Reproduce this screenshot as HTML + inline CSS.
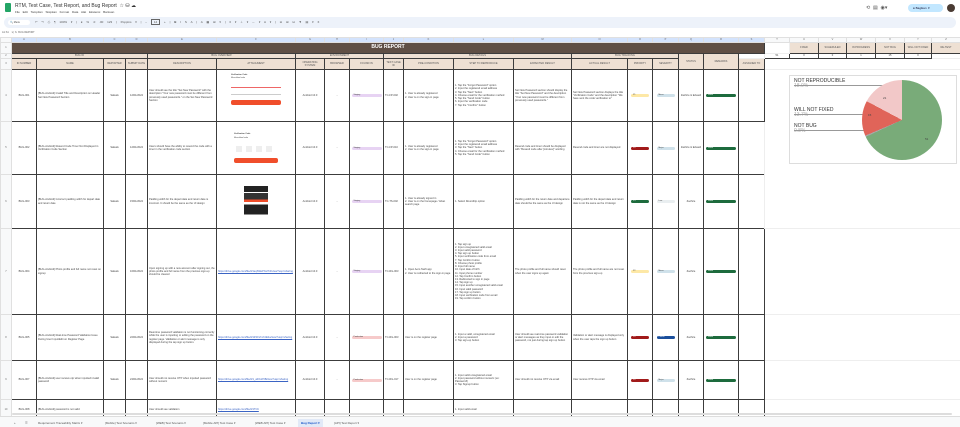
<!DOCTYPE html>
<html><head><meta charset="utf-8">
<style>
*{box-sizing:border-box;margin:0;padding:0}
body{width:960px;height:427px;overflow:hidden;background:#fff;font-family:"Liberation Sans",sans-serif;position:relative;color:#444}
.abs{position:absolute}
#tb{left:4px;top:17px;width:952px;height:11px;background:#edf2fa;border-radius:6px}
table{border-collapse:collapse;table-layout:fixed;position:absolute;left:0;top:37px;width:960px}
td{font-size:2.6px;line-height:3.2px;overflow:hidden;vertical-align:middle;padding:0 1px;white-space:normal;word-break:break-word}
.cl td{height:5px;background:#f8f9fa;border:1px solid #e0e0e0;text-align:center;color:#666;font-size:2.5px}
.cl td.sel{background:#d3e3fd}
.rh{background:#f8f9fa;border:1px solid #e0e0e0;color:#666;text-align:center;font-size:2.5px}
.g td.c{border:1px solid #3c3c3c}
.hd{background:#eee0d3;text-align:center;color:#555;border:1px solid #3c3c3c}
.title{background:#5f4f45;color:#fff;font-weight:bold;font-size:5px;text-align:center;border:1px solid #3c3c3c}
.e{border:1px solid #eee}
.ctr{text-align:center}
.chip{display:block;height:3px;border-radius:2px;margin:0 auto;font-size:2px;line-height:3px;padding-left:2px;text-align:left}
.lnk{color:#3b64c4;text-decoration:underline}
#tabs{left:0;top:416px;width:960px;height:11px;background:#f8f9fa;border-top:1px solid #ddd;font-size:3px;color:#555}
#tabs span{position:absolute;top:4px}
</style></head><body>
<div class="abs" style="left:5px;top:3px;width:6px;height:9px;background:#23a566;border-radius:1px"></div>
<div class="abs" style="left:15px;top:3px;font-size:5px;color:#333">RTM, Test Case, Test Report, and Bug Report &nbsp;☆ ⛁ ☁</div>
<div class="abs" style="left:15px;top:10px;font-size:3px;color:#444;word-spacing:2px">File Edit Tampilan Sisipkan Format Data Alat Ekstensi Bantuan</div>
<div class="abs" style="left:866px;top:5px;font-size:5px;color:#555">⟲ &nbsp;▤ &nbsp;◉▾</div>
<div class="abs" style="left:908px;top:4px;width:35px;height:8px;background:#c2e7ff;border-radius:4px;font-size:3px;line-height:8px;padding-left:5px;color:#113">● Bagikan &nbsp;▾</div>
<div class="abs" style="left:947px;top:4px;width:8px;height:8px;background:#4a3b33;border-radius:50%"></div>
<div id="tb" class="abs"></div>
<div class="abs" style="left:8px;top:20px;width:22px;height:5px;background:#fff;border-radius:3px;font-size:2.5px;line-height:5px;padding-left:2px">🔍 Menu</div>
<div class="abs" style="left:35px;top:20px;font-size:3px;color:#555;word-spacing:3px;white-space:nowrap">↶ ↷ ⎙ ¶ 100% ▾ | £ % .0 .00 123 | Poppins ▾ | − <span style="border:1px solid #666;padding:0 2px">14</span> + | <b>B</b> I S A | A ▦ ⊞ ▾ | ≡ ▾ ⊥ ▾ ↔ ▾ A ▾ | ⊖ ⊞ ⊟ ▼ ▤ ▾ Σ</div>
<div class="abs" style="left:2px;top:31px;font-size:2.5px;color:#666">A1:S1 &nbsp;&nbsp;&nbsp;▾ | fx &nbsp;BUG REPORT</div>

<table>
<colgroup>
<col style="width:11px"><col style="width:25px"><col style="width:67px"><col style="width:22px"><col style="width:22px"><col style="width:69px"><col style="width:79px"><col style="width:29px"><col style="width:25px"><col style="width:34px"><col style="width:20px"><col style="width:50px"><col style="width:60px"><col style="width:58px"><col style="width:56px"><col style="width:25px"><col style="width:26px"><col style="width:25px"><col style="width:35px"><col style="width:26px"><col style="width:25px"><col style="width:29px"><col style="width:28px"><col style="width:29px"><col style="width:29px"><col style="width:27px"><col style="width:29px">
</colgroup>
<tr class="cl"><td></td><td class="sel">A</td><td class="sel">B</td><td class="sel">C</td><td class="sel">D</td><td class="sel">E</td><td class="sel">F</td><td class="sel">G</td><td class="sel">H</td><td class="sel">I</td><td class="sel">J</td><td class="sel">K</td><td class="sel">L</td><td class="sel">M</td><td class="sel">N</td><td class="sel">O</td><td class="sel">P</td><td class="sel">Q</td><td class="sel">R</td><td class="sel">S</td><td>T</td><td>U</td><td>V</td><td>W</td><td>X</td><td>Y</td><td>Z</td></tr>
<tr style="height:11px"><td class="rh">1</td><td class="title" colspan="19">BUG REPORT</td><td class="e"></td><td class="hd">FIXED</td><td class="hd">SCHEDULED</td><td class="hd">IN PROGRESS</td><td class="hd">NOT BUG</td><td class="hd">WILL NOT FIXED</td><td class="hd">RE-TEST</td></tr>
<tr style="height:5px"><td class="rh">2</td><td class="hd" colspan="4">BUG ID</td><td class="hd" colspan="2">BUG OVERVIEW</td><td class="hd" colspan="3">ENVIRONMENT</td><td class="hd" colspan="4">BUG DETAILS</td><td class="hd" colspan="3">BUG TRACKING</td><td class="hd" rowspan="2">STATUS</td><td class="hd" rowspan="2">REMARKS</td><td class="e"></td><td class="ctr" style="border:1px solid #3c3c3c">51</td><td class="ctr" style="border:1px solid #3c3c3c">0</td><td class="ctr" style="border:1px solid #3c3c3c">0</td><td class="ctr" style="border:1px solid #3c3c3c">1</td><td class="ctr" style="border:1px solid #3c3c3c">15</td><td class="ctr" style="border:1px solid #3c3c3c">0</td></tr>
<tr style="height:11px"><td class="rh">3</td><td class="hd">ID NUMBER</td><td class="hd">NAME</td><td class="hd">REPORTER</td><td class="hd">SUBMIT DATE</td><td class="hd">DESCRIPTION</td><td class="hd">ATTACHMENT</td><td class="hd">OPERATING SYSTEM</td><td class="hd">BROWSER</td><td class="hd">FOUND IN</td><td class="hd">TEST CASE ID</td><td class="hd">PRE-CONDITION</td><td class="hd">STEP TO REPRODUCE</td><td class="hd">EXPECTED RESULT</td><td class="hd">ACTUAL RESULT</td><td class="hd">PRIORITY</td><td class="hd">SEVERITY</td><td class="hd">ASSIGNED TO</td><td class="e" colspan="7"></td></tr>

<tr class="g" style="height:52px"><td class="rh">4</td><td class="c ctr">BUG-001</td><td class="c">[BUG-Android] Invalid Title and Description on Header Set New Password Section</td><td class="c ctr">Salsals</td><td class="c ctr">12/01/2024</td><td class="c">User should see the title "Set New Password" with the description "Your new password must be different from previously used passwords." on the Set New Password Section</td><td class="c"><div style="margin:0 auto;width:50px;height:44px;font-size:2px"><b>Verification Code</b><br>Masukkan kode<br><div style="border-bottom:1px solid #e66;height:5px;margin-top:3px"></div><div style="border-bottom:1px solid #ccc;height:5px;margin-top:2px"></div><div style="background:#f04e2b;height:5px;border-radius:2px;margin-top:5px"></div></div></td><td class="c ctr">Android 10.0</td><td class="c ctr">-</td><td class="c"><span class="chip" style="background:#e7d3f3;width:30px">Staging</span></td><td class="c">TC-FP-002</td><td class="c">1. User is already registered<br>2. User is on the sign-in page</td><td class="c">1. Tap the "Forgot Password" option<br>2. Input the registered email address<br>3. Tap the "Next" button<br>4. Choose email for the verification method<br>5. Tap the "Send Code" button<br>6. Input the verification code<br>7. Tap the "Confirm" button</td><td class="c">Set New Password section should display the title "Set New Password" and the description "Your new password must be different from previously used passwords."</td><td class="c">Set New Password section displays the title "Verification Code" and the description "We have sent the code verification to"</td><td class="c"><span class="chip" style="background:#fde8a6;width:18px">P1</span></td><td class="c"><span class="chip" style="background:#cfe1ea;width:18px">Minor</span></td><td class="c ctr">Zachrie &amp; Eduard</td><td class="c"><span class="chip" style="background:#1d6b3d;color:#fff;width:30px">Fixed</span></td><td class="c"></td><td class="e" colspan="7" rowspan="3"></td></tr>

<tr class="g" style="height:53px"><td class="rh">5</td><td class="c ctr">BUG-002</td><td class="c">[BUG-Android] Resend Code Timer Not Displayed in Verification Code Section</td><td class="c ctr">Salsals</td><td class="c ctr">12/01/2024</td><td class="c">Users should have the ability to resend the code with a timer in the verification code section</td><td class="c"><div style="margin:0 auto;width:44px;font-size:2px"><b>Verification Code</b><br>Masukkan kode<div style="display:flex;gap:4px;margin:6px 2px"><i style="width:6px;height:6px;background:#eee"></i><i style="width:6px;height:6px;background:#eee"></i><i style="width:6px;height:6px;background:#eee"></i><i style="width:6px;height:6px;background:#eee"></i></div><div style="background:#f04e2b;height:5px;border-radius:2px"></div></div></td><td class="c ctr">Android 10.0</td><td class="c ctr">-</td><td class="c"><span class="chip" style="background:#e7d3f3;width:30px">Staging</span></td><td class="c">TC-FP-010</td><td class="c">1. User is already registered<br>2. User is on the sign-in page</td><td class="c">1. Tap the "Forgot Password" option<br>2. Input the registered email address<br>3. Tap the "Next" button<br>4. Choose email for the verification method<br>5. Tap the "Send Code" button</td><td class="c">Resend code and timer should be displayed with "Resend code after [minutes]" wording</td><td class="c">Resend code and timer are not displayed</td><td class="c"><span class="chip" style="background:#a11a1a;color:#fff;width:18px">P0</span></td><td class="c"><span class="chip" style="background:#cfe1ea;width:18px">Major</span></td><td class="c ctr">Zachrie &amp; Eduard</td><td class="c"><span class="chip" style="background:#1d6b3d;color:#fff;width:30px">Fixed</span></td><td class="c"></td></tr>

<tr class="g" style="height:54px"><td class="rh">6</td><td class="c ctr">BUG-003</td><td class="c">[BUG-Android] Incorrect padding width for depart date and return date</td><td class="c ctr">Salsals</td><td class="c ctr">15/01/2024</td><td class="c">Padding width for the depart date and return date is incorrect. It should be the same as the UI design</td><td class="c"><div style="margin:0 auto;width:24px;height:50px;background:linear-gradient(#fff 0 18%,#222 18% 30%,#fff 30% 32%,#333 32% 45%,#f04e2b 45% 50%,#fff 50% 55%,#222 55% 75%,#fff 75%)"></div></td><td class="c ctr">Android 10.0</td><td class="c ctr">-</td><td class="c"><span class="chip" style="background:#e7d3f3;width:30px">Staging</span></td><td class="c">TC-TS-002</td><td class="c">1. User is already signed in<br>2. User is on the homepage / ticket search page</td><td class="c">1. Select Roundtrip option</td><td class="c">Padding width for the return date and departure date should be the same as the UI design</td><td class="c">Padding width for the depart date and return date is not the same as the UI design</td><td class="c"><span class="chip" style="background:#1d6b3d;color:#fff;width:18px">P3</span></td><td class="c"><span class="chip" style="background:#e9eef0;width:18px">Low</span></td><td class="c ctr">Zachrie</td><td class="c"><span class="chip" style="background:#1d6b3d;color:#fff;width:30px">Fixed</span></td><td class="c"></td></tr>

<tr class="g" style="height:86px"><td class="rh">7</td><td class="c ctr">BUG-004</td><td class="c">[BUG-Android] Photo profile and full name not reset on signup</td><td class="c ctr">Salsals</td><td class="c ctr">16/01/2024</td><td class="c">Upon signing up with a new account after signing out, the photo profile and full name from the previous sign-up should be cleared</td><td class="c"><span class="lnk">https://drive.google.com/file/d/1eqS9IePXe7b3/view?usp=sharing</span></td><td class="c ctr">Android 10.0</td><td class="c ctr">-</td><td class="c"><span class="chip" style="background:#e7d3f3;width:30px">Staging</span></td><td class="c">TC-RG-003</td><td class="c">1. Open Aero Swift app<br>2. User is redirected to the sign-in page</td><td class="c">1. Tap sign up<br>2. Input unregistered valid email<br>3. Input valid password<br>4. Tap sign up button<br>5. Input verification code from email<br>7. Tap Confirm button<br>8. Choose photo profile<br>9. Input full name<br>10. Input date of birth<br>11. Input phone number<br>12. Tap Confirm button<br>13. Redirected to sign in page<br>14. Tap sign up<br>15. Input another unregistered valid email<br>16. Input valid password<br>17. Tap sign up button<br>18. Input verification code from email<br>19. Tap confirm button</td><td class="c">The photo profile and full name should reset when the user signs up again</td><td class="c">The photo profile and full name are not reset from the previous sign-up</td><td class="c"><span class="chip" style="background:#fde8a6;width:18px">P2</span></td><td class="c"><span class="chip" style="background:#cfe1ea;width:18px">Minor</span></td><td class="c ctr">Zachrie</td><td class="c"><span class="chip" style="background:#1d6b3d;color:#fff;width:30px">Fixed</span></td><td class="c"></td><td class="e" colspan="7"></td></tr>

<tr class="g" style="height:46px"><td class="rh">8</td><td class="c ctr">BUG-005</td><td class="c">[BUG-Android] Real-time Password Validation Issue During User Input/Edit on Register Page</td><td class="c ctr">Salsals</td><td class="c ctr">22/01/2024</td><td class="c">Real-time password validation is not functioning correctly while the user is inputting or editing the password on the register page. Validation or alert message is only displayed during the tap sign up button.</td><td class="c"><span class="lnk">https://drive.google.com/file/d/1Z3CVnxhzEbu/view?usp=sharing</span></td><td class="c ctr">Android 10.0</td><td class="c ctr">-</td><td class="c"><span class="chip" style="background:#f6caca;width:30px">Production</span></td><td class="c">TC-RG-003</td><td class="c">User is on the register page</td><td class="c">1. Input a valid, unregistered email<br>2. Input a password<br>3. Tap sign-up button</td><td class="c">User should see real-time password validation or alert messages as they input or edit the password, not just during tap sign up button</td><td class="c">Validation or alert message is displayed only when the user taps the sign up button</td><td class="c"><span class="chip" style="background:#a11a1a;color:#fff;width:18px">P0</span></td><td class="c"><span class="chip" style="background:#1b4f9c;color:#fff;width:18px">Critical</span></td><td class="c ctr">Zachrie</td><td class="c"><span class="chip" style="background:#1d6b3d;color:#fff;width:30px">Fixed</span></td><td class="c"></td><td class="e" colspan="7"></td></tr>

<tr class="g" style="height:39px"><td class="rh">9</td><td class="c ctr">BUG-007</td><td class="c">[BUG-Android] user receive otp when inputted invalid password</td><td class="c ctr">Salsals</td><td class="c ctr">24/01/2024</td><td class="c">User should not receive OTP when inputted password without numeric</td><td class="c"><span class="lnk">https://drive.google.com/file/d/1_a0OuK5B/view?usp=sharing</span></td><td class="c ctr">Android 10.0</td><td class="c ctr">-</td><td class="c"><span class="chip" style="background:#f6caca;width:30px">Production</span></td><td class="c">TC-RG-017</td><td class="c">User is on the register page</td><td class="c">1. Input valid unregistered email<br>2. Input password without numeric (ex: Password!)<br>3. Tap Signup button</td><td class="c">User should not receive OTP via email</td><td class="c">User receive OTP via email</td><td class="c"><span class="chip" style="background:#a11a1a;color:#fff;width:18px">P0</span></td><td class="c"><span class="chip" style="background:#cfe1ea;width:18px">Major</span></td><td class="c ctr">Zachrie</td><td class="c"><span class="chip" style="background:#1d6b3d;color:#fff;width:30px">Fixed</span></td><td class="c"></td><td class="e" colspan="7"></td></tr>

<tr class="g" style="height:20px"><td class="rh">10</td><td class="c ctr">BUG-008</td><td class="c">[BUG-Android] password is not valid</td><td class="c ctr"></td><td class="c ctr"></td><td class="c">User should see validation</td><td class="c"><span class="lnk">https://drive.google.com/file/d/1TCIt</span></td><td class="c"></td><td class="c"></td><td class="c"></td><td class="c"></td><td class="c"></td><td class="c">1. Input valid email</td><td class="c"></td><td class="c"></td><td class="c"></td><td class="c"></td><td class="c"></td><td class="c"></td><td class="c"></td><td class="e" colspan="7"></td></tr>
</table>

<div class="abs" style="left:789px;top:75px;width:168px;height:89px;background:#fff;border:1px solid #ddd"></div>
<div class="abs" style="left:794px;top:79px;font-size:5px;color:#333;line-height:5px">NOT REPRODUCIBLE<br><span style="color:#aaa">18.0%</span></div>
<div class="abs" style="left:794px;top:108px;font-size:5px;color:#333;line-height:5px">WILL NOT FIXED<br><span style="color:#aaa">13.7%</span></div>
<div class="abs" style="left:794px;top:124px;font-size:5px;color:#333;line-height:5px">NOT BUG<br><span style="color:#aaa">0.8%</span></div>
<div class="abs" style="left:794px;top:85px;width:95px;border-top:1px solid #999"></div>
<div class="abs" style="left:794px;top:114px;width:70px;border-top:1px solid #999"></div>
<div class="abs" style="left:794px;top:130px;width:72px;border-top:1px solid #999"></div>
<div class="abs" style="left:862px;top:80px;width:80px;height:80px;border-radius:50%;background:conic-gradient(#79ab79 0 245deg,#a8a8a8 245deg 247deg,#e06459 247deg 298deg,#f2c8c8 298deg 360deg)"></div>
<div class="abs" style="left:883px;top:96px;font-size:3px">21</div>
<div class="abs" style="left:868px;top:113px;font-size:3px">15</div>
<div class="abs" style="left:925px;top:137px;font-size:3px">51</div>

<div class="abs" style="left:12px;top:413px;width:940px;height:2px;background:#ddd;border-radius:1px"></div>
<div id="tabs" class="abs">
<span style="left:14px">+</span><span style="left:25px">☰</span>
<span style="left:38px">Requirement Traceability Matrix ▾</span>
<span style="left:105px">[Mobile] Test Scenario ▾</span>
<span style="left:156px">[WEB] Test Scenario ▾</span>
<span style="left:203px">[Mobile API] Test Case ▾</span>
<span style="left:255px">[WEB API] Test Case ▾</span>
<span style="left:298px;top:2px;background:#e1e9f7;color:#1a57c9;font-weight:bold;padding:2px 3px">Bug Report ▾</span>
<span style="left:334px">[API] Test Report ▾</span>
</div>
</body></html>
